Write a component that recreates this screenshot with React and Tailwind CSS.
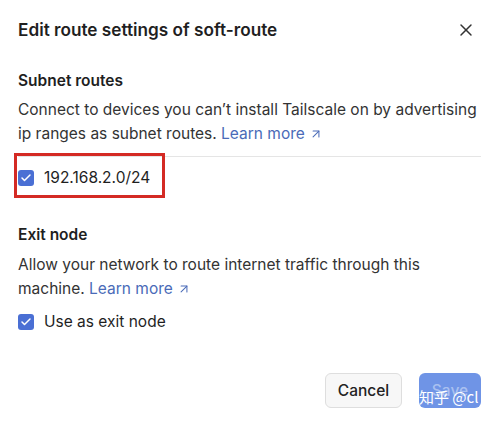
import { X, ArrowUpRight, Check } from "lucide-react";

function Box() {
  return (
    <span className="flex h-4 w-4 shrink-0 items-center justify-center rounded-[3px] bg-[#4a6fd4]">
      <Check className="h-3 w-3 text-white" strokeWidth={3} />
    </span>
  );
}

function LearnMore() {
  return (
    <a className="inline-flex items-center gap-1 text-[#4a6bb8]">
      Learn more
      <ArrowUpRight className="h-3.5 w-3.5" strokeWidth={1.75} />
    </a>
  );
}

export default function App() {
  return (
    <div className="relative h-[421px] w-[499px] bg-white px-[18px] font-['Inter',sans-serif] text-[#1f1f1f]">
      <div className="flex items-center justify-between pt-[17px]">
        <h1 className="text-[17.2px] font-semibold">Edit route settings of soft-route</h1>
        <X className="mr-[5px] h-5 w-5 text-[#333]" strokeWidth={1.75} />
      </div>

      <h2 className="mt-[26px] text-[15.5px] font-semibold">Subnet routes</h2>
      <p className="mt-[6px] text-[15.5px] leading-6 text-[#333]">
        Connect to devices you can’t install Tailscale on by advertising
        <br />
        ip ranges as subnet routes. <LearnMore />
      </p>
      <div className="mt-[10px] border-t border-[#e5e5e5]" />
      <div className="relative -ml-[4px] -mt-[4px] flex h-[45px] w-[151px] items-center border-[3px] border-[#d42a24] pl-[1px] pt-[4px]">
        <div className="flex items-center gap-[10px]">
          <Box />
          <span className="text-[15.5px] leading-6 text-[#1f1f1f]">192.168.2.0/24</span>
        </div>
      </div>

      <h2 className="mt-[25px] text-[15.5px] font-semibold">Exit node</h2>
      <p className="mt-[7px] text-[15.5px] leading-6 text-[#333]">
        Allow your network to route internet traffic through this
        <br />
        machine. <LearnMore />
      </p>
      <div className="mt-[9px] flex items-center gap-[10px]">
        <Box />
        <span className="text-[15.5px] leading-6">Use as exit node</span>
      </div>

      <div className="mt-[39px] flex justify-end gap-[17px]">
        <button className="h-[35px] w-[77px] rounded-md border border-[#dedede] bg-[#f7f7f7] text-[15.5px] font-medium text-[#222]">
          Cancel
        </button>
        <button className="relative h-[35px] w-[62px] rounded-md bg-[#6f94e6] text-[15.5px] font-medium text-[#a9c0f0]">
          Save
          <span className="absolute left-0 top-[13px] whitespace-nowrap font-['Noto_Sans_CJK_SC',sans-serif] text-[15px] font-normal text-white">
            知乎 @cl
          </span>
        </button>
      </div>
    </div>
  );
}
